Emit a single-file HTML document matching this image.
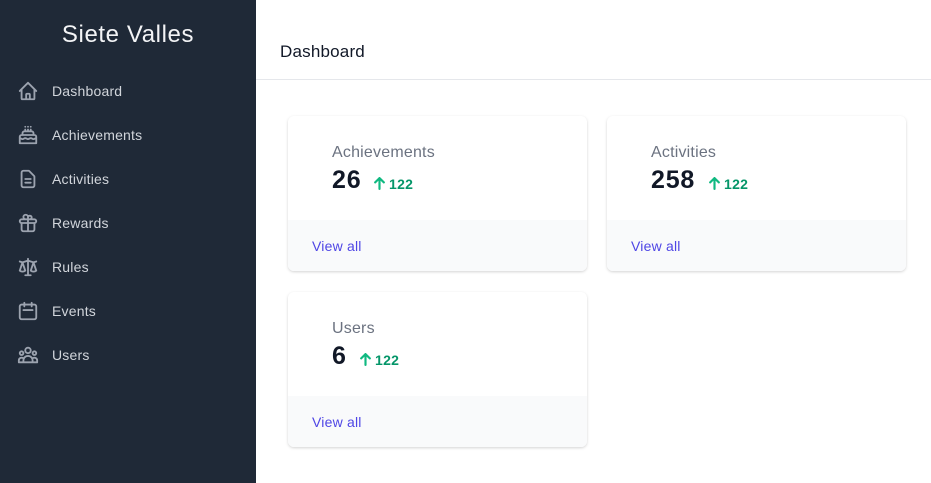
<!DOCTYPE html>
<html><head><style>
*{margin:0;padding:0;box-sizing:border-box}
body{width:931px;height:483px;overflow:hidden;font-family:"Liberation Sans",sans-serif;background:#fff;position:relative}
.sb{position:absolute;left:0;top:0;width:256px;height:483px;background:#1f2937}
.logo{position:absolute;top:21px;left:0;width:256px;text-align:center;color:#f3f4f6;font-size:24px;letter-spacing:0.6px}
.nav{position:absolute;left:0;width:256px;height:24px;color:#d1d5db;font-size:14px;letter-spacing:0.2px}
.nav svg{position:absolute;left:17px;top:1px;width:22px;height:22px}
.nav span{position:absolute;left:52px;top:4px}
.hdr{position:absolute;left:256px;top:0;right:0;height:80px;border-bottom:1px solid #e5e7eb}
.hdr span{position:absolute;left:24px;top:42px;font-size:17px;color:#111827;letter-spacing:0.2px}
.card{position:absolute;width:299px;height:155px;background:#fff;border-radius:6px;box-shadow:0 1px 3px rgba(0,0,0,.12),0 1px 2px rgba(0,0,0,.06);overflow:hidden}
.card .t{position:absolute;left:44px;top:28px;font-size:16px;color:#6b7280;letter-spacing:0.2px}
.card .n{position:absolute;left:44px;top:50px;font-size:25px;font-weight:bold;color:#111827;letter-spacing:0.8px}
.card .d{position:absolute;top:60px;font-size:14px;font-weight:bold;color:#059669;letter-spacing:0.3px}
.card .d svg{width:13px;height:13px;vertical-align:-1px;margin-right:3px}
.card .f{position:absolute;left:0;top:104px;width:100%;height:51px;background:#f9fafb}
.card .f span{position:absolute;left:24px;top:18px;font-size:14px;color:#4f46e5;letter-spacing:0.2px}
</style></head><body>
<div class="sb">
<div class="logo">Siete Valles</div>
<div class="nav" style="top:79px"><svg viewBox="0 0 24 24" fill="none" stroke="#9ca3af" stroke-width="2" stroke-linecap="round" stroke-linejoin="round"><path d="M3 12l2-2 7-7 7 7 2 2M5 10v10a1 1 0 001 1h3m10-11v10a1 1 0 01-1 1h-3m-6 0a1 1 0 001-1v-4a1 1 0 011-1h2a1 1 0 011 1v4a1 1 0 001 1m-6 0h6"/></svg><span>Dashboard</span></div>
<div class="nav" style="top:123px"><svg viewBox="0 0 24 24" fill="none" stroke="#9ca3af" stroke-width="2" stroke-linecap="round" stroke-linejoin="round"><path d="M21 15.5c-.5 0-1 .2-1.5.5a2.7 2.7 0 01-3 0 2.7 2.7 0 00-3 0 2.7 2.7 0 01-3 0 2.7 2.7 0 00-3 0 2.7 2.7 0 01-3 0c-.5-.3-1-.5-1.5-.5M9 6v2m3-2v2m3-2v2M9 3h.01M12 3h.01M15 3h.01M21 21v-7a2 2 0 00-2-2H5a2 2 0 00-2 2v7h18zm-3-9V10a2 2 0 00-2-2H8a2 2 0 00-2 2v2h12z"/></svg><span>Achievements</span></div>
<div class="nav" style="top:167px"><svg viewBox="0 0 24 24" fill="none" stroke="#9ca3af" stroke-width="2" stroke-linecap="round" stroke-linejoin="round"><path d="M9 12h6m-6 4h6m2 5H7a2 2 0 01-2-2V5a2 2 0 012-2h5.6a1 1 0 01.7.3l5.4 5.4a1 1 0 01.3.7V19a2 2 0 01-2 2z"/></svg><span>Activities</span></div>
<div class="nav" style="top:211px"><svg viewBox="0 0 24 24" fill="none" stroke="#9ca3af" stroke-width="2" stroke-linecap="round" stroke-linejoin="round"><path d="M12 8v13m0-13V6a2 2 0 112 2h-2zm0 0V5.5A2.5 2.5 0 109.5 8H12zm-7 4h14M5 12a2 2 0 110-4h14a2 2 0 110 4M5 12v7a2 2 0 002 2h10a2 2 0 002-2v-7"/></svg><span>Rewards</span></div>
<div class="nav" style="top:255px"><svg viewBox="0 0 24 24" fill="none" stroke="#9ca3af" stroke-width="2" stroke-linecap="round" stroke-linejoin="round"><path d="M3 6l3 1m0 0l-3 9a5 5 0 006 0M6 7l3 9M6 7l6-2m6 2l3-1m-3 1l-3 9a5 5 0 006 0M18 7l3 9m-3-9l-6-2m0-2v2m0 16V5m0 16H9m3 0h3"/></svg><span>Rules</span></div>
<div class="nav" style="top:299px"><svg viewBox="0 0 24 24" fill="none" stroke="#9ca3af" stroke-width="2" stroke-linecap="round" stroke-linejoin="round"><path d="M8 7V3m8 4V3m-9 8h10M5 21h14a2 2 0 002-2V7a2 2 0 00-2-2H5a2 2 0 00-2 2v12a2 2 0 002 2z"/></svg><span>Events</span></div>
<div class="nav" style="top:343px"><svg viewBox="0 0 24 24" fill="none" stroke="#9ca3af" stroke-width="2" stroke-linecap="round" stroke-linejoin="round"><path d="M17 20h5v-2a3 3 0 00-5.36-1.86M17 20H7m10 0v-2c0-.66-.13-1.28-.36-1.86M7 20H2v-2a3 3 0 015.36-1.86M7 20v-2c0-.66.13-1.28.36-1.86m0 0a5 5 0 019.28 0M15 7a3 3 0 11-6 0 3 3 0 016 0zm6 3a2 2 0 11-4 0 2 2 0 014 0zM7 10a2 2 0 11-4 0 2 2 0 014 0z"/></svg><span>Users</span></div>
</div>
<div class="hdr"><span>Dashboard</span></div>
<div class="card" style="left:288px;top:116px"><div class="t">Achievements</div><div class="n">26</div><div class="d" style="left:85px"><svg viewBox="0 0 12 12" fill="none" stroke="#10b981" stroke-width="2" stroke-linecap="round" stroke-linejoin="round"><path d="M6 11V1M2 5l4-4 4 4"/></svg>122</div><div class="f"><span>View all</span></div></div>
<div class="card" style="left:607px;top:116px"><div class="t">Activities</div><div class="n">258</div><div class="d" style="left:101px"><svg viewBox="0 0 12 12" fill="none" stroke="#10b981" stroke-width="2" stroke-linecap="round" stroke-linejoin="round"><path d="M6 11V1M2 5l4-4 4 4"/></svg>122</div><div class="f"><span>View all</span></div></div>
<div class="card" style="left:288px;top:292px"><div class="t">Users</div><div class="n">6</div><div class="d" style="left:71px"><svg viewBox="0 0 12 12" fill="none" stroke="#10b981" stroke-width="2" stroke-linecap="round" stroke-linejoin="round"><path d="M6 11V1M2 5l4-4 4 4"/></svg>122</div><div class="f"><span>View all</span></div></div>
</body></html>
